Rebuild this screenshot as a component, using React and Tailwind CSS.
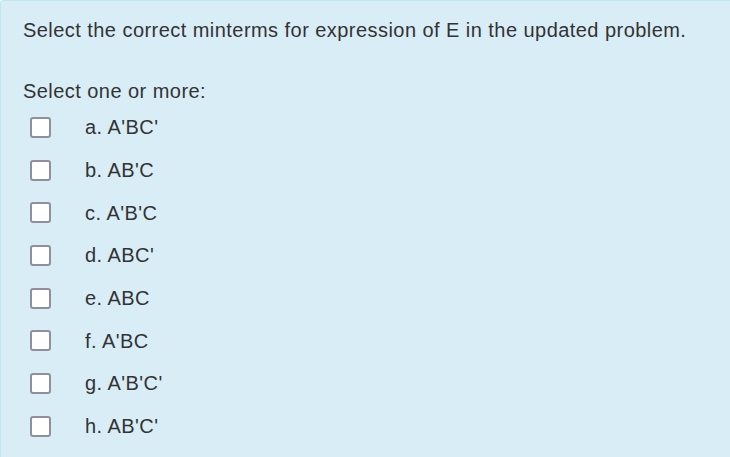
import React from 'react';

const options = [
  { key: 'a', label: "A'BC'" },
  { key: 'b', label: "AB'C" },
  { key: 'c', label: "A'B'C" },
  { key: 'd', label: "ABC'" },
  { key: 'e', label: 'ABC' },
  { key: 'f', label: "A'BC" },
  { key: 'g', label: "A'B'C'" },
  { key: 'h', label: "AB'C'" },
];

export default function App() {
  return (
    <div className="w-[730px] h-[457px] overflow-hidden bg-white">
      <div
        className="w-[760px] h-[470px] bg-[#d9edf7] border-t border-l border-[#bce8f1] rounded-tl-[4px] pl-[22px] pt-[16px] text-[20px] leading-[26px] tracking-[0.45px] text-[#333333]"
        style={{ fontFamily: '"Liberation Sans", Arial, sans-serif' }}
      >
        <p>Select the correct minterms for expression of E in the updated problem.</p>

        <p className="mt-[35px]">Select one or more:</p>

        <div className="mt-[2px]">
          {options.map((o) => (
            <div key={o.key} className="flex items-center h-[42.7px]">
              <div className="ml-[7px] w-[21px] h-[21px] rounded-[3px] border-2 border-[#8f8f9d] bg-white" />
              <span className="ml-[34px]">
                {o.key}. {o.label}
              </span>
            </div>
          ))}
        </div>
      </div>
    </div>
  );
}
